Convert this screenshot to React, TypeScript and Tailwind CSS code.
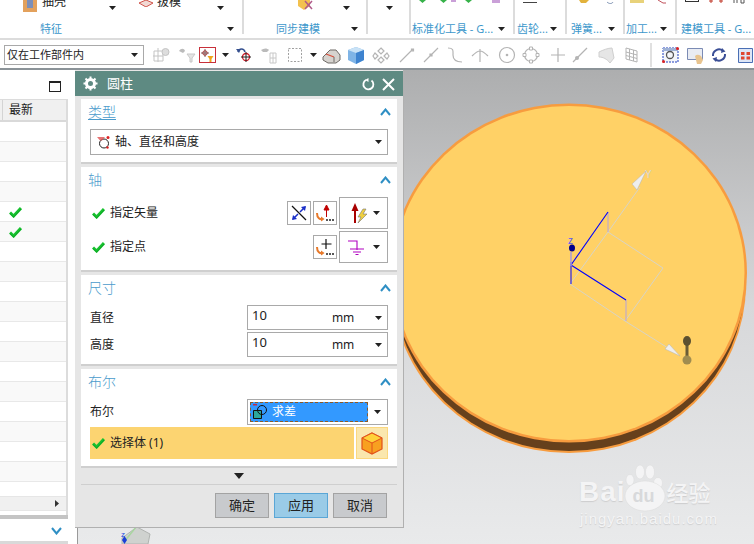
import React from 'react';

const Caret = ({ className = '' }: { className?: string }) => (
  <svg width="7" height="4" viewBox="0 0 7 4" className={`shrink-0 ${className}`}>
    <path d="M0 0h7L3.5 4z" fill="#222" />
  </svg>
);

const Check = ({ className = '' }: { className?: string }) => (
  <svg width="13" height="12" viewBox="0 0 13 12" className={`shrink-0 ${className}`}>
    <path d="M1 6.5 4.6 10 12 2" fill="none" stroke="#17c22f" strokeWidth="3" />
    <path d="M1 7.5 4.6 11 12 3" fill="none" stroke="#0a9a22" strokeWidth="0.8" />
  </svg>
);

const Chevron = ({ up = true }: { up?: boolean }) => (
  <svg width="11" height="8" viewBox="0 0 11 8" className="shrink-0">
    <path d={up ? 'M1 7 5.5 1.5 10 7' : 'M1 1 5.5 6.5 10 1'} fill="none" stroke="#2f8fc4" strokeWidth="2" />
  </svg>
);

const RibbonGroup = ({
  width,
  label,
  labelClass = '',
  caret = true,
  children,
}: {
  width: string;
  label: string;
  labelClass?: string;
  caret?: boolean;
  children?: React.ReactNode;
}) => (
  <div className={`${width} h-[34px] flex flex-col shrink-0 border-r-2 border-[#dcdcdc]`}>
    <div className="h-[22px] flex items-start shrink-0">{children}</div>
    <div className={`h-[14px] flex items-center justify-between shrink-0 pr-[8px] text-[11px] leading-[14px] text-[#3c97cb] whitespace-nowrap ${labelClass}`}>
      <span>{label}</span>
      {caret && <Caret />}
    </div>
  </div>
);

const Section = ({ title, underline, children, className = '' }: { title: string; underline?: boolean; children: React.ReactNode; className?: string }) => (
  <div className={`bg-white border-b-2 border-[#cfcfcf] mx-[6px] px-[9px] shrink-0 ${className}`}>
    <div className="h-[27px] flex items-center justify-between">
      <span className={`-ml-[2px] -mt-[3px] text-[14px] font-light text-[#4a9bcc] ${underline ? 'underline underline-offset-2' : ''}`}>{title}</span>
      <span className="-mr-[3px] -mt-[1px] flex">
        <Chevron />
      </span>
    </div>
    {children}
  </div>
);

const IconBtn = ({ children, className = '' }: { children: React.ReactNode; className?: string }) => (
  <div className={`w-[24px] h-[24px] border border-[#a9a9a9] flex items-center justify-center bg-white shrink-0 ${className}`}>{children}</div>
);

const ArrowHook = ({ plus }: { plus?: boolean }) => (
  <svg width="20" height="20" viewBox="0 0 20 20">
    {plus ? (
      <path d="M11 2v10M6.5 7h10" stroke="#111" strokeWidth="1.2" />
    ) : (
      <path d="M11.500 14V5M11.500 2l-2.500 5h5z" stroke="#c00000" fill="#c00000" strokeWidth="1" />
    )}
    <path d="M2 10c0 5 3 7 6 6" fill="none" stroke="#e8792a" strokeWidth="2" />
    <path d="M6 13.500 9.500 16 6 18.500z" fill="#e8792a" />
    <path d="M11 17h2M14 17h2M17 17h2" stroke="#222" strokeWidth="1.600" />
  </svg>
);

const ValueInput = () => (
  <div className="w-[141px] h-[25px] border border-[#a9a9a9] flex items-center pl-[4px] pr-[5px] text-[13px] text-[#222]">
    <span className="-mt-[4px]">10</span>
    <span className="ml-[65px] mt-[1px] text-[12px]">mm</span>
    <Caret className="ml-auto" />
  </div>
);

const GrayIcon = ({ d, className = '', size = 18 }: { d: string; className?: string; size?: number }) => (
  <svg width={size} height={size} viewBox="0 0 18 18" className={`shrink-0 ${className}`}>
    <path d={d} fill="none" stroke="#b4b4b4" strokeWidth="1.200" />
  </svg>
);

const Toolbar = () => (
  <div className="h-[30px] flex items-center border-t-2 border-[#dcdcdc] bg-white pt-[2px]">
    <div className="ml-[4px] w-[140px] h-[20px] border border-[#a9a9a9] flex items-center pl-[2px] pr-[5px] text-[11px] text-[#222] shrink-0">
      <span>仅在工作部件内</span>
      <Caret className="ml-auto" />
    </div>
    <svg width="18" height="18" viewBox="0 0 18 18" className="ml-[8px] shrink-0">
      <path d="M2 5h9v10H2zM6 2v14M1 10h10" fill="none" stroke="#c4c4c4" />
      <circle cx="13.500" cy="6" r="3.500" fill="#ddd" stroke="#c4c4c4" />
    </svg>
    <svg width="18" height="18" viewBox="0 0 18 18" className="ml-[8px] shrink-0">
      <path d="M1 5c2-3 5-3 6 0l-2 2-2-1z" fill="#bbb" />
      <path d="M9 8h8l-3 4v4h-2v-4z" fill="#e4e4e4" stroke="#c8c8c8" />
    </svg>
    <div className="ml-[3px] w-[17px] h-[16px] border border-[#c8303a] flex items-center justify-center shrink-0">
      <svg width="15" height="14" viewBox="0 0 15 14">
        <circle cx="5" cy="5" r="2.200" fill="none" stroke="#a33" />
        <path d="M5 1v8M1 5h8" stroke="#633" strokeWidth="0.800" />
        <path d="M7.500 8h6l-2 3v3h-2v-3z" fill="#efa51b" />
      </svg>
    </div>
    <Caret className="ml-[6px]" />
    <svg width="18" height="18" viewBox="0 0 18 18" className="ml-[7px] shrink-0">
      <path d="M2 6c1-4 6-4 7 0" fill="none" stroke="#35508f" strokeWidth="1.600" />
      <path d="M0 3l3 4 2-4z" fill="#35508f" />
      <circle cx="10" cy="11" r="3.500" fill="none" stroke="#d21f2c" strokeWidth="1.300" />
      <path d="M10 6v10M5 11h10" stroke="#222" />
    </svg>
    <svg width="18" height="18" viewBox="0 0 18 18" className="ml-[6px] shrink-0">
      <path d="M1 4c3-2 6-2 8 0l-2 2H3z" fill="#bbb" />
      <path d="M10 7h6v10h-6zM13 7v10M10 12h6" fill="none" stroke="#c8c8c8" />
    </svg>
    <svg width="16" height="16" viewBox="0 0 16 16" className="ml-[9px] shrink-0">
      <path d="M1.500 1.500h13v13h-13z" fill="none" stroke="#a0a0a0" strokeDasharray="2 1.500" />
    </svg>
    <Caret className="ml-[7px]" />
    <svg width="19" height="17" viewBox="0 0 19 17" className="ml-[5px] shrink-0">
      <path d="M1 10 8 3h6l4 5v5l-4 3H6l-5-3z" fill="#d6d3cf" stroke="#6e6a66" />
      <path d="M4 7l8 3" stroke="#d8503c" strokeWidth="1.300" />
      <path d="M12 10v5" stroke="#6e6a66" />
    </svg>
    <svg width="18" height="18" viewBox="0 0 18 18" className="ml-[6px] shrink-0">
      <path d="M1 4 9 1l8 3v10l-8 4-8-4z" fill="#7fb4e6" />
      <path d="M1 4l8 3 8-3-8-3z" fill="#c9e2f6" />
      <path d="M9 7v11l8-4V4z" fill="#3e83cf" />
    </svg>
    <GrayIcon className="ml-[7px]" d="M9 2l3 3-3 3-3-3zM3 7l3 3-3 3-2-3zM15 7l2 3-2 3-3-3zM9 11l3 3-3 3-3-3z" />
    <GrayIcon className="ml-[8px]" d="M2 16 15 3M13.500 3h2v2h-2z" />
    <GrayIcon className="ml-[6px]" d="M2 16 16 2M8 8h2v2H8z" />
    <GrayIcon className="ml-[6px]" d="M2 2c6 0 5 3 5 7s2 7 9 7" />
    <GrayIcon className="ml-[7px]" d="M1 10c3-3 5-5 8-5s5 2 8 5M9 3v13" />
    <svg width="18" height="18" viewBox="0 0 18 18" className="ml-[9px] shrink-0">
      <circle cx="9" cy="9" r="7.500" fill="none" stroke="#b4b4b4" strokeWidth="1.200" />
      <circle cx="9" cy="9" r="1.300" fill="#b4b4b4" />
    </svg>
    <svg width="18" height="18" viewBox="0 0 18 18" className="ml-[6px] shrink-0">
      <circle cx="9" cy="9" r="6.500" fill="none" stroke="#b4b4b4" strokeWidth="1.200" />
      <path d="M7.500 1h3v3h-3zM7.500 14h3v3h-3zM1 7.500h3v3H1zM14 7.500h3v3h-3z" fill="#fff" stroke="#b4b4b4" />
    </svg>
    <GrayIcon className="ml-[9px]" d="M9 2v14M2 9h14" />
    <svg width="18" height="18" viewBox="0 0 18 18" className="ml-[4px] shrink-0">
      <path d="M2 16 16 2" stroke="#b4b4b4" strokeWidth="1.200" />
      <circle cx="6" cy="12" r="2" fill="#b4b4b4" />
    </svg>
    <svg width="17" height="18" viewBox="0 0 17 18" className="ml-[9px] shrink-0">
      <path d="M1 6c4-2 9-4 13-4l2 10-4 5C9 13 5 11 1 11z" fill="#e6e6e6" stroke="#cfcfcf" />
    </svg>
    <svg width="13" height="16" viewBox="0 0 13 16" className="ml-[10px] shrink-0">
      <path d="M1 1l11 3v11L1 12zM4.500 2v11M8.500 3v11M1 5l11 3M1 8.500l11 3" fill="none" stroke="#b4b4b4" />
    </svg>
    <div className="ml-[12px] w-[2px] h-[24px] bg-[#e0e0e0] shrink-0" />
    <svg width="17" height="16" viewBox="0 0 17 16" className="ml-[10px] shrink-0">
      <path d="M1 1h15v14H1z" fill="#f4f6fa" stroke="#1f3fbf" strokeDasharray="2 1" />
      <path d="M1 1h15v3H1z" fill="#9fb2d6" />
      <circle cx="8" cy="8" r="3.500" fill="none" stroke="#555" strokeWidth="1.300" />
      <circle cx="1.500" cy="14.500" r="1.500" fill="#d22" />
      <circle cx="15.500" cy="1.500" r="1.500" fill="#d22" />
    </svg>
    <svg width="17" height="17" viewBox="0 0 17 17" className="ml-[8px] shrink-0">
      <path d="M0.500 1.500h15v11h-15z" fill="#e9ecf3" stroke="#7b8bb4" />
      <path d="M8 9c2-2 4-1 6 0l2 4-2 4H10z" fill="#e8c48f" />
    </svg>
    <svg width="16" height="16" viewBox="0 0 16 16" className="ml-[7px] shrink-0">
      <path d="M2 9a6 6 0 0 1 10-5" fill="none" stroke="#3b4f96" strokeWidth="2" />
      <path d="M14 7a6 6 0 0 1-10 5" fill="none" stroke="#3b4f96" strokeWidth="2" />
      <path d="M11 1l3.500 3.500L10 6zM5 15l-3.500-3.500L6 10z" fill="#3b4f96" />
    </svg>
    <svg width="15" height="15" viewBox="0 0 15 15" className="ml-[11px] shrink-0">
      <path d="M0.500 0.500h14v14h-14z" fill="#dde6f6" stroke="#4a6fb5" />
      <path d="M3 4h3.500v3H3zM8.500 4H12v3H8.500zM3 8.500h3.500v3H3zM8.500 8.500H12v3H8.500z" fill="#e0452f" />
    </svg>
  </div>
);

const LeftPanel = () => (
  <div className="w-[75px] shrink-0 bg-white flex flex-col">
    <div className="h-[29px] flex items-start justify-end pr-[14px] pt-[11px] shrink-0">
      <div className="w-[12px] h-[11px] border border-[#222] border-t-[2px]" />
    </div>
    <div className="w-[68px] h-[416px] border-r-2 border-t border-[#dcdcdc] flex flex-col shrink-0">
      <div className="h-[22px] bg-[#f0f0f0] border-b-2 border-[#d9d9d9] flex shrink-0">
        <div className="ml-[2px] pl-[6px] border-l border-[#d4d4d4] flex items-center text-[12px] text-[#222]">最新</div>
      </div>
      {Array.from({ length: 18 }).map((_, i) => (
        <div key={i} className={`h-[20px] border-b border-[#e8e8e8] flex items-center pl-[9px] shrink-0 ${i % 2 ? 'bg-[#f9f9f9]' : 'bg-white'}`}>
          {(i === 4 || i === 5) && <Check />}
        </div>
      ))}
      <div className="h-[14px] shrink-0" />
      <div className="h-[15px] bg-[#f0f0f0] border-y border-[#e6e6e6] flex items-center justify-end pr-[7px] shrink-0">
        <svg width="4" height="7" viewBox="0 0 4 7"><path d="M0 0l4 3.500L0 7z" fill="#333" /></svg>
      </div>
    </div>
    <div className="w-[68px] h-[4px] bg-[#c4c4c4] shrink-0" />
    <div className="w-[68px] flex-1 flex items-start justify-end pr-[6px] pt-[8px]">
      <Chevron up={false} />
    </div>
    <div className="w-[68px] h-[3px] bg-[#d9d9d9] shrink-0" />
  </div>
);

const Viewport = () => (
  <div className="flex-1 ml-[2px] border-l border-[#9a9a9a] relative bg-gradient-to-b from-[#adaeaf] via-[#d7d8da] to-[#e9eaeb] overflow-hidden">
    <svg width="676" height="474" viewBox="78 70 676 474" className="block">
      <ellipse cx="569" cy="284" rx="177" ry="169" fill="#f79c3f" />
      <ellipse cx="569" cy="283" rx="175.500" ry="168" fill="#66401c" />
      <ellipse cx="569" cy="273" rx="178" ry="169.500" fill="#f79c3f" />
      <ellipse cx="569" cy="273" rx="175.500" ry="167" fill="#ffd166" />
      <g fill="none" stroke="#d8d4c6" strokeWidth="1">
        <path d="M570 284 608 232 663 268 625 321zM608 232 640 187M625 321 668 348" />
      </g>
      <path d="M646 171 632 184 637 190z" fill="#eee" stroke="#b5b5b0" strokeWidth="0.500" />
      <path d="M680 356 665 349 669 344z" fill="#eee" stroke="#b5b5b0" strokeWidth="0.500" />
      <path d="M608 212v20M626 300v21" stroke="#b6a3d8" strokeWidth="1" fill="none" />
      <path d="M571 262V284" stroke="#0000ff" strokeWidth="1" />
      <path d="M571 265 608 212M571 265 626 300" stroke="#0000ff" strokeWidth="1.100" fill="none" />
      <path d="M571 252v14" stroke="#a89ad8" strokeWidth="1.500" />
      <ellipse cx="572" cy="248" rx="3" ry="3.500" fill="#00008b" />
      <text x="568" y="244" fontSize="10" fill="#5a5af0" fontFamily="Liberation Sans">z</text>
      <path d="M687 340v20" stroke="#6a5c36" strokeWidth="3" />
      <ellipse cx="687" cy="341" rx="4" ry="5" fill="#5c5030" />
      <circle cx="687" cy="360" r="4.500" fill="#a08c50" />
      <text x="645" y="178" fontSize="10" fill="#d9d8d2" fontFamily="Liberation Sans">Y</text>
      <path d="M122 538 137 527 150 534 148 544H122z" fill="#cfd2cf" stroke="#b0b3b0" />
      <path d="M124 542 136 527" stroke="#a8d6a0" strokeWidth="1.500" />
      <text x="121" y="537" fontSize="8" fill="#2a4fe0" fontFamily="Liberation Sans">z</text>
      <path d="M124.500 536l-2.500 4 2.500 4 2.500-4z" fill="#1a3fd8" />
      <g fill="#f4f4f5" stroke="#dadadb" strokeWidth="0.500">
        <ellipse cx="640" cy="472" rx="4.500" ry="7" />
        <ellipse cx="650" cy="472" rx="4.500" ry="7" />
        <ellipse cx="630" cy="480" rx="4" ry="5.500" />
        <ellipse cx="658" cy="483" rx="4.500" ry="5.500" />
        <ellipse cx="645" cy="496" rx="20" ry="15" />
      </g>
    </svg>
    <div className="absolute left-[501px] top-[408px] flex items-start text-[#f4f4f5] font-bold leading-none [text-shadow:0_1px_1px_#cdcdce]">
      <span className="text-[28px] font-['Liberation_Sans',sans-serif] tracking-[1px]">Bai</span>
      <span className="text-[18px] text-[#d8d9db] font-['Liberation_Sans',sans-serif] ml-[7px] mt-[9px] [text-shadow:none]">du</span>
      <span className="text-[22px] ml-[12px] mt-[3px] font-medium">经验</span>
    </div>
    <div className="absolute left-[502px] top-[441px] text-[15px] tracking-[1px] text-[#f4f4f5] leading-none font-['Liberation_Sans',sans-serif] [text-shadow:0_1px_1px_#cdcdce]">
      jingyan.baidu.com
    </div>
  </div>
);

const Dialog = () => (
  <div className="absolute left-[75px] top-0 w-[329px] h-[458px] bg-[#e6e6e6] border-r border-b border-[#b0b0b0] flex flex-col text-[12px] text-[#222]">
    <div className="h-[25px] mt-[1px] bg-[#5e8a82] flex items-center pl-[8px] pr-[8px] text-white shrink-0">
      <svg width="15" height="15" viewBox="0 0 15 15" className="shrink-0">
        <circle cx="7.500" cy="7.500" r="4" fill="none" stroke="#fff" strokeWidth="3" />
        <path d="M7.500 0.500v3M7.500 11.500v3M0.500 7.500h3M11.500 7.500h3M2.500 2.500l2 2M10.500 10.500l2 2M2.500 12.500l2-2M10.500 4.500l2-2" stroke="#fff" strokeWidth="2" />
      </svg>
      <span className="ml-[9px] text-[13px]">圆柱</span>
      <svg width="13" height="13" viewBox="0 0 13 13" className="ml-auto mt-[2px]">
        <path d="M9.500 2.500A5 5 0 1 1 4 2" fill="none" stroke="#fff" strokeWidth="1.800" />
        <path d="M6.500 0v4L3 2z" fill="#fff" />
      </svg>
      <svg width="13" height="13" viewBox="0 0 13 13" className="ml-[7px] mt-[1px]">
        <path d="M1 1l11 11M12 1 1 12" stroke="#fff" strokeWidth="2" />
      </svg>
    </div>

    <Section title="类型" underline className="mt-[3px] h-[65px]">
      <div className="h-[26px] mt-[3px] border border-[#a9a9a9] flex items-center pl-[5px] pr-[5px]">
        <svg width="15" height="15" viewBox="0 0 15 15" className="shrink-0">
          <circle cx="8" cy="8.500" r="4.500" fill="none" stroke="#222" />
          <path d="M1 2h8L6 5.500H4z" fill="#e05050" opacity="0.800" />
          <circle cx="12" cy="2.500" r="1.500" fill="#d22" />
          <circle cx="11.500" cy="12.500" r="1.200" fill="#d22" />
        </svg>
        <span className="ml-[4px]">轴、直径和高度</span>
        <Caret className="ml-auto" />
      </div>
    </Section>

    <Section title="轴" className="mt-[3px] h-[105px]">
      <div className="h-[32px] mt-[3px] flex items-center">
        <Check className="ml-[2px]" />
        <span className="ml-[5px]">指定矢量</span>
        <IconBtn className="ml-auto">
          <svg width="18" height="18" viewBox="0 0 18 18">
            <path d="M2 2l14 14" stroke="#111" strokeWidth="1.200" />
            <path d="M10 8l5-5M8 10l-5 5" stroke="#1a2fc8" strokeWidth="1.500" />
            <path d="M16 2l-5 1 4 4zM2 16l5-1-4-4z" fill="#1a2fc8" />
          </svg>
        </IconBtn>
        <IconBtn className="ml-[2px]">
          <ArrowHook />
        </IconBtn>
        <div className="ml-[2px] w-[49px] h-[32px] border border-[#a9a9a9] flex items-center pl-[10px] pr-[7px]">
          <svg width="18" height="24" viewBox="0 0 18 24" className="shrink-0">
            <path d="M5 22V8" stroke="#a80000" strokeWidth="2" />
            <path d="M5 2 1.500 10h7z" fill="#a80000" />
            <path d="M13 8 8 16h3l-3 6 9-9h-4l3-5z" fill="#f0d040" stroke="#777" strokeWidth="0.600" />
          </svg>
          <Caret className="ml-auto" />
        </div>
      </div>
      <div className="h-[32px] mt-[2px] flex items-center">
        <Check className="ml-[2px]" />
        <span className="ml-[5px]">指定点</span>
        <IconBtn className="ml-auto">
          <ArrowHook plus />
        </IconBtn>
        <div className="ml-[2px] w-[49px] h-[32px] border border-[#a9a9a9] flex items-center pl-[7px] pr-[7px]">
          <svg width="18" height="18" viewBox="0 0 18 18" className="shrink-0">
            <path d="M1 3h9v9M3 11h14M6 14h8M8.500 16.500h3" fill="none" stroke="#b000c0" strokeWidth="1.100" />
          </svg>
          <Caret className="ml-auto" />
        </div>
      </div>
    </Section>

    <Section title="尺寸" className="mt-[3px] h-[91px]">
      <div className="flex items-center justify-between mt-[3px]">
        <span>直径</span>
        <ValueInput />
      </div>
      <div className="flex items-center justify-between mt-[2px]">
        <span>高度</span>
        <ValueInput />
      </div>
    </Section>

    <Section title="布尔" className="mt-[3px] h-[99px]">
      <div className="flex items-center justify-between mt-[3px]">
        <span>布尔</span>
        <div className="w-[141px] h-[26px] border border-[#a9a9a9] flex items-center pl-[2px] pr-[6px]">
          <div className="w-[118px] h-[20px] bg-[#3399ff] border border-dashed border-[#8a5a2a] flex items-center pl-[1px] text-white">
            <svg width="16" height="16" viewBox="0 0 16 16" className="shrink-0">
              <path d="M1 0.800h4" stroke="#e01020" strokeWidth="1.200" />
              <path d="M1.500 6.500h8v8h-8z" fill="#2ca79c" stroke="#111" />
              <circle cx="10" cy="6" r="4.500" fill="none" stroke="#111" />
            </svg>
            <span className="ml-[4px]">求差</span>
          </div>
          <Caret className="ml-auto" />
        </div>
      </div>
      <div className="flex mt-[2px] h-[32px]">
        <div className="flex-1 bg-[#fcd471] flex items-center pl-[2px]">
          <Check />
          <span className="ml-[5px]">选择体 (1)</span>
        </div>
        <div className="ml-[2px] w-[32px] bg-[#fae7ae] border border-[#fbd77e] flex items-center justify-center">
          <svg width="22" height="23" viewBox="0 0 22 23">
            <path d="M11 1 21 6v11l-10 5-10-5V6z" fill="#f8a020" stroke="#e2501a" strokeWidth="1.200" />
            <path d="M1 6l10 5 10-5-10-5z" fill="#ffd23a" stroke="#e2501a" strokeWidth="1" />
            <path d="M11 11v11" stroke="#e2501a" strokeWidth="1" />
          </svg>
        </div>
      </div>
    </Section>

    <div className="h-[16px] flex items-center justify-center shrink-0">
      <svg width="10" height="6" viewBox="0 0 10 6"><path d="M0 0h10L5 6z" fill="#222" /></svg>
    </div>
    <div className="mx-[6px] h-px bg-[#cfcfcf] shrink-0" />
    <div className="flex justify-end gap-[5px] pr-[16px] mt-[8px] text-[13px]">
      <button className="w-[54px] h-[25px] bg-[#c8cacd] border border-[#a3a3a3]">确定</button>
      <button className="w-[54px] h-[25px] bg-[#9acbe7] border border-[#5aa6d6]">应用</button>
      <button className="w-[54px] h-[25px] bg-[#c8cacd] border border-[#a3a3a3]">取消</button>
    </div>
  </div>
);

export default function App() {
  return (
    <div className="w-[754px] h-[544px] overflow-hidden bg-white flex flex-col font-['Noto_Sans','Noto_Sans_CJK_SC',sans-serif]">
      <div className="h-[38px] flex shrink-0 text-[12px] text-[#222] leading-[16px]">
        <RibbonGroup width="w-[244px]" label="特征" labelClass="pl-[40px]">
          <svg width="14" height="12" viewBox="0 0 14 12" className="ml-[23px] shrink-0">
            <path d="M0 0h14v12H0z" fill="#e3a15c" />
            <path d="M4 0h6v8H4z" fill="#7d8fb8" />
          </svg>
          <span className="ml-[5px] -mt-[6px]">抽壳</span>
          <Caret className="ml-[43px] mt-[6px]" />
          <svg width="14" height="7" viewBox="0 0 14 7" className="ml-[23px] shrink-0">
            <path d="M0 3 7 0l7 3-7 4z" fill="#f1d9d4" stroke="#d0534a" />
          </svg>
          <span className="ml-[4px] -mt-[6px]">拔模</span>
          <Caret className="ml-[36px] mt-[6px]" />
        </RibbonGroup>
        <RibbonGroup width="w-[124px]" label="同步建模" labelClass="pl-[32px]">
          <svg width="15" height="10" viewBox="0 0 15 10" className="ml-[54px] shrink-0">
            <path d="M0 0h12v6l-6 4-6-4z" fill="#f3c14e" />
            <path d="M7 1l7 8M14 1 7 9" stroke="#b05a8a" strokeWidth="1.500" />
          </svg>
          <Caret className="ml-[30px] mt-[6px]" />
        </RibbonGroup>
        <RibbonGroup width="w-[43px]" label="" caret={false}>
          <Caret className="ml-[18px] mt-[6px]" />
        </RibbonGroup>
        <RibbonGroup width="w-[104px]" label="标准化工具 - G..." labelClass="pl-[1px]">
          <svg width="90" height="4" viewBox="0 0 90 4" className="ml-[7px] shrink-0">
            <path d="M1 0h7L4.500 3zM22 0h7l-3.500 3zM47 0h7l-3.500 3z" fill="#37b24a" />
            <path d="M33 0h5v2h-5zM74 0h8v3h-8z" fill="#caa0d8" />
          </svg>
        </RibbonGroup>
        <RibbonGroup width="w-[52px]" label="齿轮..." labelClass="pl-[2px]">
          <span className="ml-[8px] mt-[2px] w-[14px] h-px bg-[#444]" />
        </RibbonGroup>
        <RibbonGroup width="w-[58px]" label="弹簧..." labelClass="pl-[4px]">
          <svg width="40" height="4" viewBox="0 0 40 4" className="ml-[10px] shrink-0">
            <path d="M2 0h10l-3 3H4z" fill="#e2b23c" />
            <path d="M30 2c2 2 5 2 6 0" fill="none" stroke="#7a8fb0" />
          </svg>
        </RibbonGroup>
        <RibbonGroup width="w-[52px]" label="加工..." labelClass="pl-[1px]">
          <svg width="40" height="4" viewBox="0 0 40 4" className="ml-[3px] shrink-0">
            <path d="M2 0h14v3H2z" fill="#e8d27a" />
            <path d="M30 0l5 3h3" fill="none" stroke="#c0505a" />
          </svg>
        </RibbonGroup>
        <div className="w-[78px] h-[34px] shrink-0 flex flex-col">
          <div className="h-[22px] flex items-start shrink-0">
            <span className="ml-[8px] w-[14px] h-[2px] border-b border-x border-[#333]" />
            <svg width="14" height="4" viewBox="0 0 14 4" className="ml-[10px] shrink-0">
              <path d="M2 0v3M12 0v3M0 1h4M10 1h4" stroke="#c0392b" />
            </svg>
            <svg width="14" height="4" viewBox="0 0 14 4" className="ml-[10px] shrink-0">
              <path d="M1 0v3M4 0v3M8 0v3h3V0" stroke="#555" fill="none" />
            </svg>
          </div>
          <div className="h-[14px] flex items-center pl-[4px] text-[11px] leading-[14px] text-[#3c97cb] whitespace-nowrap shrink-0">建模工具 - G...</div>
        </div>
      </div>
      <Toolbar />
      <div className="h-[2px] shrink-0 bg-[#8b9398]" />
      <div className="flex-1 flex relative min-h-0">
        <LeftPanel />
        <Viewport />
        <Dialog />
      </div>
    </div>
  );
}
